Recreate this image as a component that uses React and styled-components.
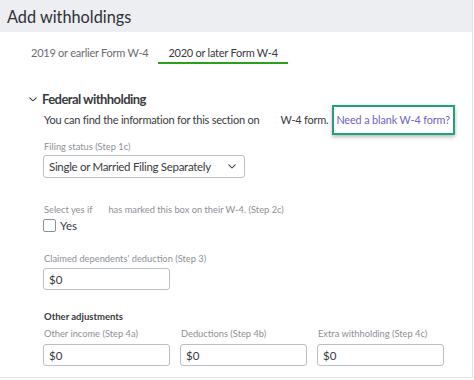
import React from "react";
import styled, { createGlobalStyle } from "styled-components";

const Global = createGlobalStyle`
  html, body { margin: 0; padding: 0; background: #fff; }
  body { font-family: Lato, "Open Sans", sans-serif; color: #393a3d; }
`;

const Frame = styled.div`
  width: 473px;
  height: 378px;
  border-right: 1px solid #e3e4e6;
  border-bottom: 1px solid #e3e4e6;
  box-sizing: border-box;
  overflow: hidden;
  display: flex;
  flex-direction: column;
`;

const Header = styled.div`
  height: 32px;
  background: #eceef1;
  display: flex;
  align-items: center;
  padding-left: 7px;
  font-size: 16.3px;
  color: #2f3033;
  flex-shrink: 0;
`;

const Tabs = styled.div`
  display: flex;
  padding: 14px 0 0 21px;
`;

const Tab = styled.div`
  font-size: 11px;
  letter-spacing: -0.25px;
  line-height: 14px;
  white-space: nowrap;
  color: ${(p) => (p.$active ? "#393a3d" : "#6b6c72")};
  padding: 0 10px 2px;
  border-bottom: 2px solid ${(p) => (p.$active ? "#2ca01c" : "transparent")};
`;

const Section = styled.div`
  padding: 27px 0 0 29px;
`;

const SectionTitle = styled.div`
  display: flex;
  align-items: center;
  gap: 5px;
  font-size: 13px;
  letter-spacing: -0.55px;
  font-weight: 700;
  line-height: 16px;
  color: #393a3d;
`;

const Body = styled.div`
  padding-left: 14px;
`;

const InfoRow = styled.div`
  display: flex;
  align-items: center;
  margin-top: -3px;
  height: 31px;
`;

const InfoText = styled.span`
  font-size: 11px;
  letter-spacing: -0.23px;
  white-space: nowrap;
  color: #393a3d;
  padding-left: 1px;
`;

const Gap = styled.span`
  display: inline-block;
  width: ${(p) => p.$w}px;
`;

const LinkBox = styled.div`
  margin-left: 4px;
  border: 2px solid #21a179;
  box-shadow: 0 2px 4px rgba(0, 0, 0, 0.28);
  height: 30px;
  display: flex;
  align-items: center;
  padding: 0 3px 0 2px;
  box-sizing: border-box;
`;

const Link = styled.span`
  color: #6c5fc7;
  font-size: 10.8px;
  letter-spacing: -0.1px;
  white-space: nowrap;
`;

const Label = styled.div`
  font-size: 9.3px;
  color: #8d9096;
  margin-top: ${(p) => p.$mt || 0}px;
  line-height: 12px;
  white-space: nowrap;
  padding-left: 1px;
`;

const Select = styled.div`
  margin-top: 2px;
  width: 202px;
  height: 23px;
  box-sizing: border-box;
  border: 1px solid #babec5;
  border-radius: 3px;
  display: flex;
  align-items: center;
  justify-content: space-between;
  padding: 0 8px 0 5px;
  font-size: 11.5px;
  letter-spacing: -0.3px;
  white-space: nowrap;
  color: #393a3d;
`;

const CheckRow = styled.div`
  display: flex;
  align-items: center;
  gap: 4px;
  margin-top: 3px;
  height: 13px;
  font-size: 11.5px;
  color: #393a3d;
`;

const Box = styled.span`
  width: 13px;
  height: 13px;
  box-sizing: border-box;
  border: 1px solid #8d9096;
  border-radius: 2px;
  display: inline-block;
`;

const Input = styled.div`
  margin-top: ${(p) => p.$mt || 3}px;
  width: 127px;
  height: 22px;
  box-sizing: border-box;
  border: 1px solid #babec5;
  border-radius: 3px;
  display: flex;
  align-items: center;
  padding-left: 5px;
  font-size: 11.5px;
  color: #393a3d;
`;

const SubHead = styled.div`
  margin-top: 21px;
  font-size: 9.5px;
  line-height: 12px;
  font-weight: 700;
  color: #393a3d;
  padding-left: 1px;
`;

const Grid = styled.div`
  display: grid;
  grid-template-columns: 127px 127px 127px;
  column-gap: 10px;
  margin-top: 5px;
`;

const Field = styled.div`
  display: flex;
  flex-direction: column;
`;

const Chevron = ({ w = 8 }) => (
  <svg width={w} height={w * 0.6} viewBox="0 0 10 6" fill="none">
    <path d="M1 1l4 4 4-4" stroke="#393a3d" strokeWidth="1.3" strokeLinecap="round" strokeLinejoin="round" />
  </svg>
);

export default function App() {
  return (
    <>
      <Global />
      <Frame>
        <Header>Add withholdings</Header>
        <Tabs>
          <Tab>2019 or earlier Form W-4</Tab>
          <Tab $active>2020 or later Form W-4</Tab>
        </Tabs>
        <Section>
          <SectionTitle>
            <Chevron w={8} />
            Federal withholding
          </SectionTitle>
          <Body>
            <InfoRow>
              <InfoText>
                You can find the information for this section on<Gap $w={21} />W-4 form.
              </InfoText>
              <LinkBox>
                <Link>Need a blank W-4 form?</Link>
              </LinkBox>
            </InfoRow>
            <Label $mt={6}>Filing status (Step 1c)</Label>
            <Select>
              Single or Married Filing Separately
              <Chevron w={8} />
            </Select>
            <Label $mt={26}>
              Select yes if<Gap $w={16} />has marked this box on their W-4. (Step 2c)
            </Label>
            <CheckRow>
              <Box />
              Yes
            </CheckRow>
            <Label $mt={21}>Claimed dependents' deduction (Step 3)</Label>
            <Input>$0</Input>
            <SubHead>Other adjustments</SubHead>
            <Grid>
              <Field>
                <Label>Other income (Step 4a)</Label>
                <Input $mt={4}>$0</Input>
              </Field>
              <Field>
                <Label>Deductions (Step 4b)</Label>
                <Input $mt={4}>$0</Input>
              </Field>
              <Field>
                <Label>Extra withholding (Step 4c)</Label>
                <Input $mt={4}>$0</Input>
              </Field>
            </Grid>
          </Body>
        </Section>
      </Frame>
    </>
  );
}
